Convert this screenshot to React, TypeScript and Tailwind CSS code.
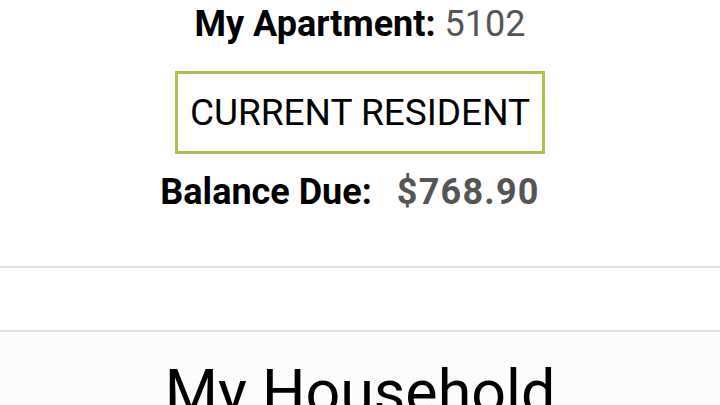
export default function App() {
  return (
    <div className="w-[720px] h-[405px] overflow-hidden bg-white font-['Roboto',sans-serif]">
      <div className="flex flex-col items-center">
        <div className="mt-[6px] h-[36px] flex items-center text-[36px] leading-none whitespace-pre">
          <span className="font-bold text-black">My Apartment:</span>
          <span className="text-[#555555]"> 5102</span>
        </div>
        <div className="mt-[29px] w-[370px] h-[83px] border-[3px] border-[#a6c44c] flex items-center justify-center text-[37px] leading-none text-black">
          CURRENT RESIDENT
        </div>
        <div className="mt-[20px] h-[36px] pr-[20px] flex items-center text-[36px] leading-none">
          <span className="font-bold text-black">Balance Due:</span>
          <span className="ml-[25px] font-bold text-[#555555] tracking-[1.2px]">$768.90</span>
        </div>
      </div>
      <div className="mt-[56px] border-t-2 border-[#e0e0e0] h-[64px]" />
      <div className="border-t-2 border-[#e0e0e0] bg-[#fcfcfc] h-[200px] flex justify-center">
        <div className="mt-[30px] text-[61px] leading-none text-black whitespace-nowrap">My Household</div>
      </div>
    </div>
  );
}
